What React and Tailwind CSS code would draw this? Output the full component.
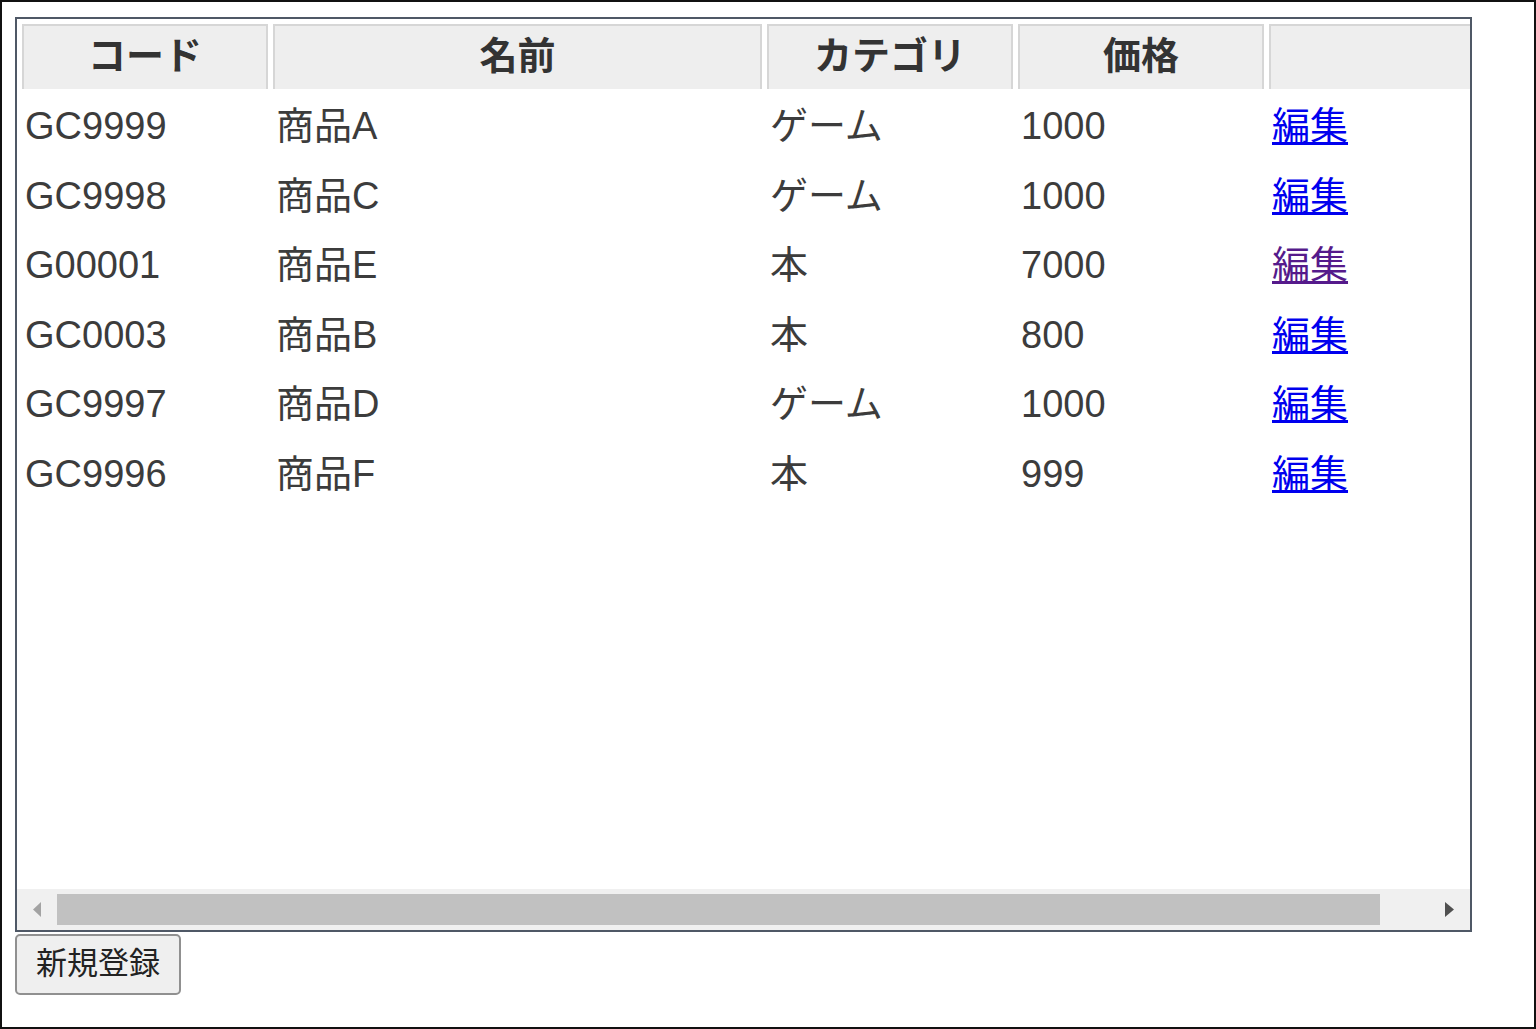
import React from "react";

const rows = [
  { code: "GC9999", name: "商品A", cat: "ゲーム", price: "1000", visited: false },
  { code: "GC9998", name: "商品C", cat: "ゲーム", price: "1000", visited: false },
  { code: "G00001", name: "商品E", cat: "本", price: "7000", visited: true },
  { code: "GC0003", name: "商品B", cat: "本", price: "800", visited: false },
  { code: "GC9997", name: "商品D", cat: "ゲーム", price: "1000", visited: false },
  { code: "GC9996", name: "商品F", cat: "本", price: "999", visited: false },
];

const font = { fontFamily: '"Liberation Sans", Arial, "Noto Sans CJK JP", sans-serif' };

export default function App() {
  const th =
    "h-[65px] bg-[#eeeeee] border-2 border-b-0 border-[#d6d6d6] text-center align-middle font-bold text-[#333] p-0 pb-[3px]";
  const td = "h-[64.5px] p-0 pl-[3px] align-middle text-left whitespace-nowrap";
  return (
    <div
      className="w-[1536px] h-[1029px] bg-white border-2 border-[#111] pl-[13px] pt-[15px] flex flex-col items-start"
      style={font}
    >
      <div className="w-[1457px] h-[915px] border-2 border-[#4f5866] flex flex-col bg-white">
        <div className="flex-1 overflow-hidden">
          <table className="border-separate border-spacing-[5px] text-[38px] leading-none text-[#3c3c3c] table-fixed w-[1503px]">
            <colgroup>
              <col className="w-[246px]" />
              <col className="w-[489px]" />
              <col className="w-[246px]" />
              <col className="w-[246px]" />
              <col className="w-[246px]" />
            </colgroup>
            <thead>
              <tr>
                <th className={th}>コード</th>
                <th className={th}>名前</th>
                <th className={th}>カテゴリ</th>
                <th className={th}>価格</th>
                <th className={th}></th>
              </tr>
            </thead>
            <tbody>
              {rows.map((r) => (
                <tr key={r.code}>
                  <td className={td}>{r.code}</td>
                  <td className={td}>{r.name}</td>
                  <td className={td}>{r.cat}</td>
                  <td className={td}>{r.price}</td>
                  <td className={td}>
                    <a
                      href="#"
                      className={
                        "underline underline-offset-[3px] " +
                        (r.visited ? "text-[#551a8b]" : "text-[#0000ee]")
                      }
                    >
                      編集
                    </a>
                  </td>
                </tr>
              ))}
            </tbody>
          </table>
        </div>
        <div className="h-[41px] bg-[#f0f0f0] flex items-center shrink-0">
          <div className="w-[40px] h-full flex items-center justify-center">
            <svg width="9" height="15" viewBox="0 0 9 15">
              <polygon points="8,0 8,15 0,7.5" fill="#a3a3a3" />
            </svg>
          </div>
          <div className="h-[31px] w-[1323px] bg-[#c1c1c1]" />
          <div className="flex-1 h-full flex items-center justify-end pr-[16px]">
            <svg width="9" height="15" viewBox="0 0 9 15">
              <polygon points="0,0 0,15 9,7.5" fill="#505050" />
            </svg>
          </div>
        </div>
      </div>
      <button className="mt-[2px] w-[166px] h-[61px] bg-[#efefef] border-2 border-[#909090] rounded-[5px] text-[31px] text-[#222] flex items-center justify-center">
        新規登録
      </button>
    </div>
  );
}
